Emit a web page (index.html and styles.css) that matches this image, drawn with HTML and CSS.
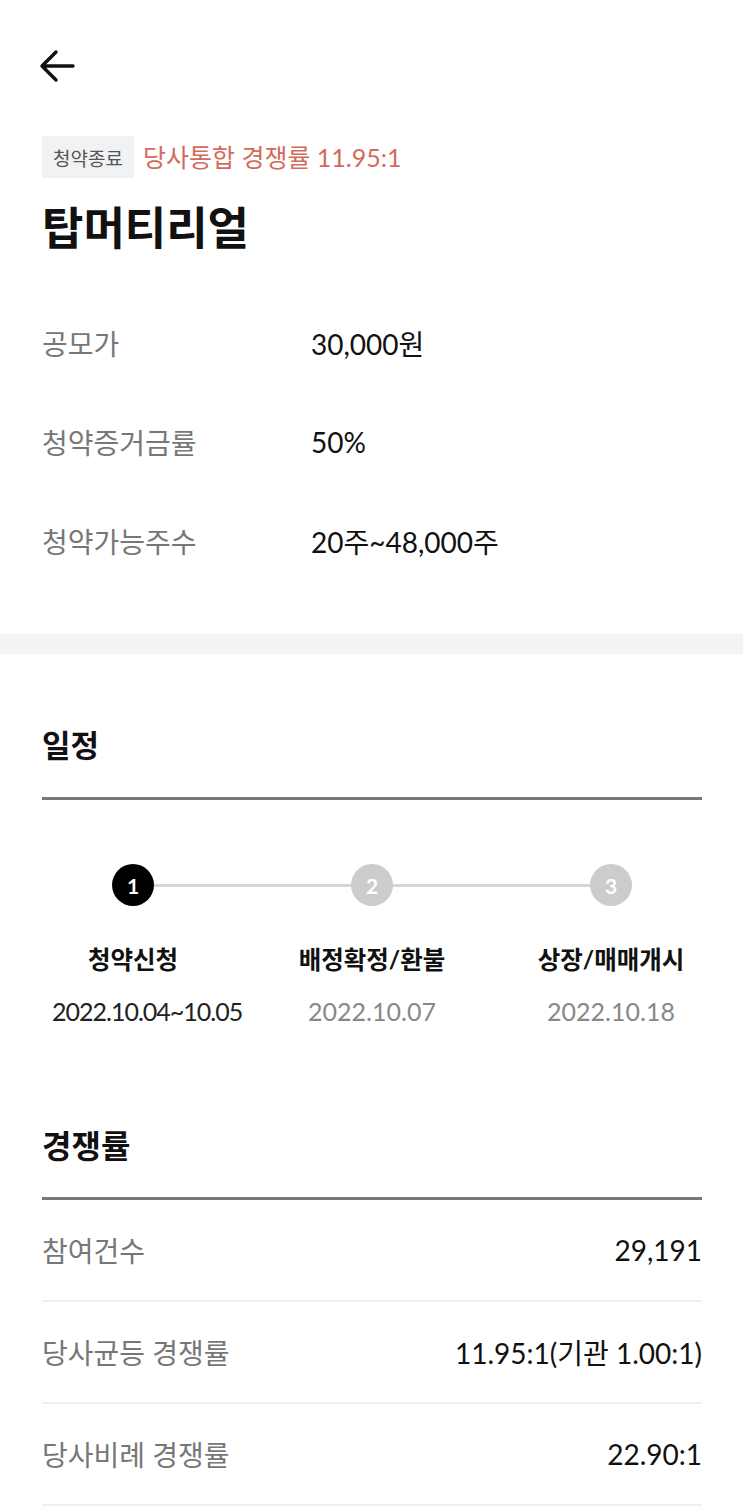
FILE: index.html
```html
<!DOCTYPE html>
<html lang="ko">
<head>
<meta charset="utf-8">
<title>탑머티리얼</title>
<link rel="stylesheet" href="styles.css">
</head>
<body>
<div class="page">
  <header class="top">
    <svg class="back" width="36" height="34" viewBox="0 0 36 34" aria-hidden="true">
      <path d="M34 17 H4 M17 3 L3 17 L17 31" fill="none" stroke="#111" stroke-width="3.4" stroke-linecap="round" stroke-linejoin="round"/>
    </svg>
  </header>

  <section class="summary">
    <div class="status-row">
      <span class="badge">청약종료</span>
      <span class="rate">당사통합 경쟁률 11.95:1</span>
    </div>
    <h1 class="title">탑머티리얼</h1>
    <dl class="info">
      <div class="info-row"><dt>공모가</dt><dd>30,000원</dd></div>
      <div class="info-row"><dt>청약증거금률</dt><dd>50%</dd></div>
      <div class="info-row"><dt>청약가능주수</dt><dd>20주~48,000주</dd></div>
    </dl>
  </section>

  <div class="band"></div>

  <section class="schedule">
    <h2 class="heading">일정</h2>
    <div class="rule"></div>
    <div class="steps">
      <div class="step active">
        <div class="circle">1</div>
        <div class="step-label">청약신청</div>
        <div class="step-date">2022.10.04~10.05</div>
      </div>
      <div class="step">
        <div class="circle">2</div>
        <div class="step-label">배정확정/환불</div>
        <div class="step-date">2022.10.07</div>
      </div>
      <div class="step">
        <div class="circle">3</div>
        <div class="step-label">상장/매매개시</div>
        <div class="step-date">2022.10.18</div>
      </div>
    </div>
  </section>

  <section class="competition">
    <h2 class="heading">경쟁률</h2>
    <div class="rule"></div>
    <div class="comp-row"><span class="comp-label">참여건수</span><span class="comp-value">29,191</span></div>
    <div class="comp-row"><span class="comp-label">당사균등 경쟁률</span><span class="comp-value">11.95:1(기관 1.00:1)</span></div>
    <div class="comp-row"><span class="comp-label">당사비례 경쟁률</span><span class="comp-value">22.90:1</span></div>
  </section>
</div>
</body>
</html>
```

FILE: styles.css
```css
* { box-sizing: border-box; }
html, body { margin: 0; padding: 0; background: #fff; }
body {
  font-family: "Lato", "Noto Sans CJK KR", "Noto Sans", sans-serif;
  color: #111;
  width: 743px;
  overflow-x: hidden;
}
.page { width: 743px; }

.top { padding: 49px 0 0 39px; height: 136px; }
.back { display: block; }

.summary { padding: 0 41px 44px 42px; }
.status-row { display: flex; align-items: center; height: 42px; }
.badge {
  display: flex; align-items: center; justify-content: center;
  height: 42px; width: 92px;
  background: #f1f2f4; color: #555;
  font-size: 19px;
}
.rate { margin-left: 9px; color: #d46a5b; font-size: 25px; line-height: 42px; }

.title {
  margin: 25px 0 0 0;
  font-size: 45px; line-height: 50px; font-weight: 700;
}

.info { margin: 40px 0 0 0; }
.info-row {
  display: grid; grid-template-columns: 269px 1fr; align-items: center;
  height: 99px;
}
.info dt { color: #777; font-size: 28px; margin: 0; }
.info dd { color: #111; font-size: 28px; margin: 0; }

.band { height: 20px; background: #f2f3f5; }

.schedule, .competition { padding: 0 41px 0 42px; }
.heading {
  margin: 71px 0 0 0;
  font-size: 31px; line-height: 40px; font-weight: 700;
}
.competition .heading { margin-top: 100px; font-size: 32px; }
.rule { margin-top: 32px; height: 3px; background: #777; }
.competition .rule { margin-top: 31px; }

.steps {
  position: relative;
  display: flex; justify-content: space-between;
  padding: 0 10px;
  margin-top: 64px;
}
.steps::before {
  content: ""; position: absolute;
  left: 91px; right: 91px; top: 20px; height: 3px;
  background: #d6d6d6;
}
.step { width: 162px; text-align: center; position: relative; }
.circle {
  width: 42px; height: 42px; border-radius: 50%;
  margin: 0 auto;
  background: #cccccc; color: #fff;
  display: flex; align-items: center; justify-content: center;
  font-size: 21px; font-weight: 700;
  position: relative;
}
.step.active .circle { background: #000; }
.step-label {
  margin-top: 39px;
  font-size: 24.5px; line-height: 30px; font-weight: 700;
  white-space: nowrap;
}
.step-date {
  margin-top: 21px;
  font-size: 25px; line-height: 30px; color: #888;
  white-space: nowrap;
}
.step.active .step-date { color: #222; letter-spacing: -1px; }

.comp-row {
  display: flex; justify-content: space-between; align-items: center;
  height: 102px; border-bottom: 2px solid #f0f0f0;
}
.comp-label { color: #777; font-size: 28px; }
.comp-value { color: #111; font-size: 28px; }
```
